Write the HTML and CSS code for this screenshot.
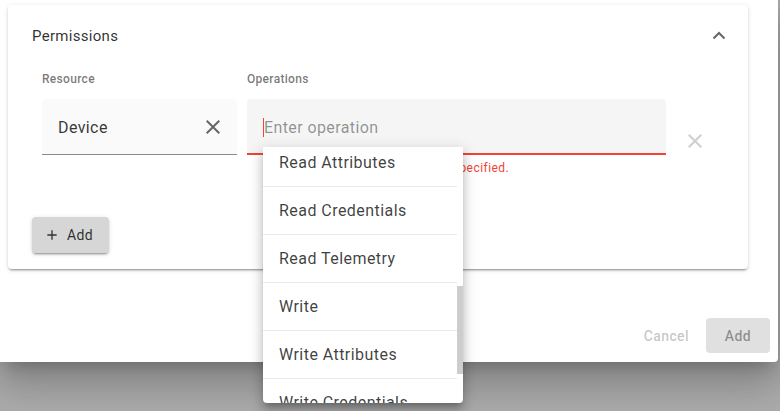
FILE: index.html
```html
<!DOCTYPE html>
<html>
<head>
<meta charset="utf-8">
<link rel="stylesheet" href="styles.css">
</head>
<body>
<div class="dialog">
  <div class="dialog-content">
    <div class="card">
      <div class="card-header">
        <span class="card-title">Permissions</span>
        <svg class="chevron" width="14" height="10" viewBox="0 0 14 10"><polyline points="1.5,7.5 7,2 12.5,7.5" fill="none" stroke="#666" stroke-width="2"/></svg>
      </div>
      <div class="card-body">
        <div class="perm-row">
          <div class="col col-resource">
            <div class="label">Resource</div>
            <div class="field field-resource">
              <span class="field-value">Device</span>
              <svg class="icon-clear" width="24" height="24" viewBox="0 0 24 24"><path fill="#666" d="M19 6.41L17.59 5 12 10.59 6.41 5 5 6.41 10.59 12 5 17.59 6.41 19 12 13.41 17.59 19 19 17.59 13.41 12z"/></svg>
            </div>
          </div>
          <div class="col col-ops">
            <div class="label">Operations</div>
            <div class="field field-ops">
              <span class="caret"></span><span class="placeholder">Enter operation</span>
              <div class="dropdown">
                <div class="dropdown-list">
                  <div class="option">Read Attributes</div>
                  <div class="option">Read Credentials</div>
                  <div class="option">Read Telemetry</div>
                  <div class="option">Write</div>
                  <div class="option">Write Attributes</div>
                  <div class="option">Write Credentials</div>
                </div>
                <div class="scroll-track"><div class="scroll-thumb"></div></div>
              </div>
            </div>
            <div class="error">At least one operation should be specified.</div>
          </div>
          <div class="col col-remove">
            <svg width="24" height="24" viewBox="0 0 24 24"><path fill="#cfcfcf" d="M19 6.41L17.59 5 12 10.59 6.41 5 5 6.41 10.59 12 5 17.59 6.41 19 12 13.41 17.59 19 19 17.59 13.41 12z"/></svg>
          </div>
        </div>
        <button class="btn-add-perm"><svg width="16" height="16" viewBox="0 0 24 24"><path fill="#333" d="M19 13h-6v6h-2v-6H5v-2h6V5h2v6h6v2z"/></svg><span>Add</span></button>
      </div>
    </div>
  </div>
  <div class="dialog-actions">
    <button class="btn-text">Cancel</button>
    <button class="btn-flat">Add</button>
  </div>
</div>
</body>
</html>
```
FILE: styles.css
```css
* { box-sizing: border-box; }
html, body { margin: 0; padding: 0; }
body {
  width: 780px;
  height: 411px;
  overflow: hidden;
  background: #adadad;
  font-family: Roboto, "Liberation Sans", sans-serif;
}
.dialog {
  width: 778px;
  height: 362px;
  background: #fff;
  border-radius: 0 0 4px 0;
  display: flex;
  flex-direction: column;
  box-shadow: 0 11px 15px -7px rgba(0,0,0,.2), 0 24px 38px 3px rgba(0,0,0,.14), 0 9px 46px 8px rgba(0,0,0,.12);
  position: relative;
}
.dialog-content {
  padding: 5px 30px 0 8px;
}
.card {
  width: 740px;
  height: 264px;
  background: #fff;
  border-radius: 4px;
  box-shadow: 0 3px 1px -2px rgba(0,0,0,.2), 0 2px 2px 0 rgba(0,0,0,.14), 0 1px 5px 0 rgba(0,0,0,.12);
}
.card-header {
  height: 64px;
  padding: 0 22px 0 24px;
  display: flex;
  align-items: center;
  justify-content: space-between;
}
.card-title {
  font-size: 15px;
  color: rgba(0,0,0,.82);
  letter-spacing: .3px;
  margin-top: -2px;
}
.chevron { margin-top: -2px; }
.card-body {
  padding: 0 24px 16px 24px;
}
.perm-row {
  display: flex;
  padding-left: 10px;
}
.col { display: flex; flex-direction: column; }
.col-resource { width: 195px; margin-right: 10px; }
.col-ops { width: 419px; }
.col-remove { padding: 60px 0 0 17px; }
.label {
  margin-top: 2px;
  height: 16px;
  line-height: 16px;
  font-size: 12px;
  font-weight: 500;
  letter-spacing: .3px;
  color: rgba(0,0,0,.54);
  margin-bottom: 12px;
}
.field {
  height: 56px;
  border-radius: 4px 4px 0 0;
  display: flex;
  align-items: center;
  padding: 0 16px;
  font-size: 16px;
  letter-spacing: .4px;
  position: relative;
}
.field-resource {
  background: #fafafa;
  border-bottom: 1px solid #8a8a8a;
  justify-content: space-between;
  padding-right: 12px;
  padding-top: 1px;
}
.field-value { color: rgba(0,0,0,.8); }
.icon-clear { margin-top: 0; }
.field-ops {
  background: #f5f5f5;
  border-bottom: 2px solid #f44336;
  padding-top: 2px;
}
.caret {
  width: 1px;
  height: 19px;
  background: #f44336;
  margin-right: 0;
}
.placeholder { color: rgba(0,0,0,.42); }
.error {
  padding: 6px 0 0 16px;
  font-size: 12px;
  line-height: 14px;
  letter-spacing: .45px;
  color: #f44336;
}
.dropdown {
  position: absolute;
  left: 16px;
  top: 48px;
  width: 200px;
  height: 256px;
  background: #fff;
  border-radius: 0 0 4px 4px;
  overflow: hidden;
  display: flex;
  z-index: 10;
  letter-spacing: 0;
  box-shadow: 0 5px 5px -3px rgba(0,0,0,.2), 0 8px 10px 1px rgba(0,0,0,.14), 0 3px 14px 2px rgba(0,0,0,.12);
}
.dropdown-list {
  width: 194px;
  margin-top: -8px;
}
.option {
  height: 48px;
  line-height: 48px;
  padding: 0 16px;
  font-size: 16px;
  letter-spacing: .45px;
  color: rgba(0,0,0,.76);
  border-bottom: 1px solid #ebebeb;
  white-space: nowrap;
}
.scroll-track { width: 6px; }
.scroll-thumb {
  margin-top: 139px;
  height: 88px;
  background: #cdcdcd;
}
.btn-add-perm {
  margin-top: 42px;
  height: 36px;
  width: 77px;
  border: none;
  border-radius: 4px;
  background: #d6d6d6;
  display: flex;
  align-items: center;
  padding: 0 0 0 12px;
  gap: 7px;
  font-family: inherit;
  font-size: 14px;
  color: rgba(0,0,0,.8);
  letter-spacing: .4px;
  box-shadow: 0 3px 1px -2px rgba(0,0,0,.2), 0 2px 2px 0 rgba(0,0,0,.14), 0 1px 5px 0 rgba(0,0,0,.12);
}
.dialog-actions {
  margin-top: auto;
  padding: 0 8px 9px 0;
  display: flex;
  justify-content: flex-end;
  align-items: center;
  gap: 1px;
}
.btn-text, .btn-flat {
  height: 35px;
  min-width: 64px;
  padding: 0 16px;
  border: none;
  border-radius: 4px;
  font-family: inherit;
  font-size: 14px;
  font-weight: 500;
  letter-spacing: .4px;
}
.btn-text { background: transparent; color: rgba(0,0,0,.24); }
.btn-flat { background: #e0e0e0; color: rgba(0,0,0,.38); }
```
